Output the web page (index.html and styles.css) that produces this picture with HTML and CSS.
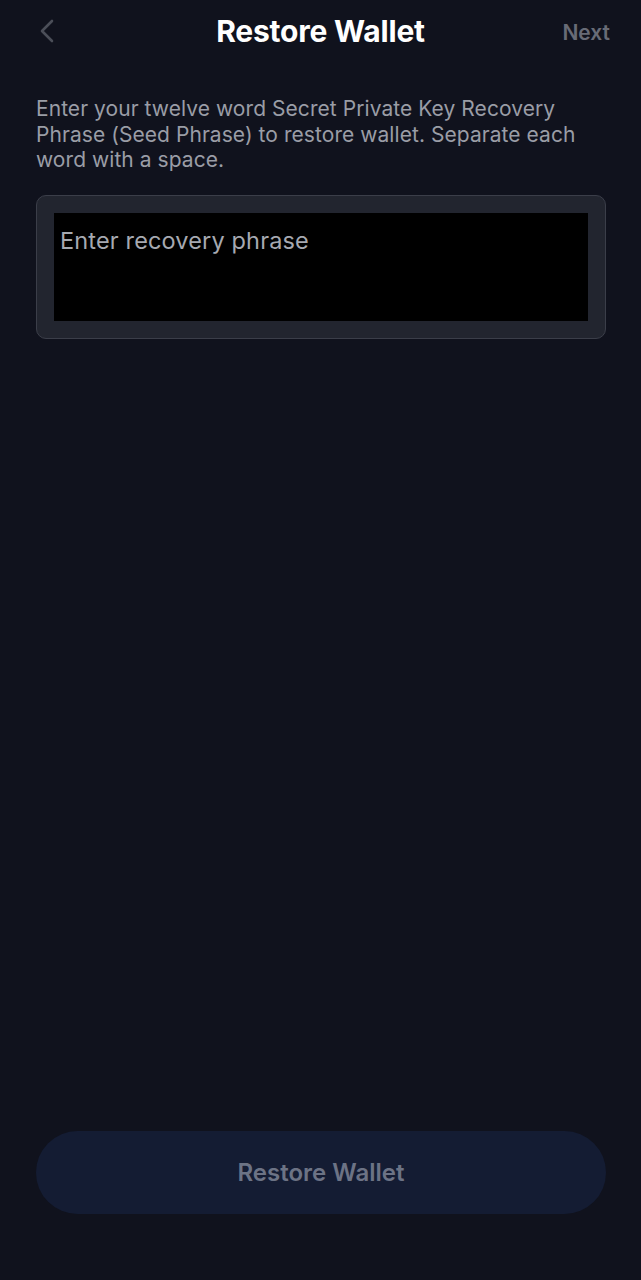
FILE: index.html
```html
<!DOCTYPE html>
<html>
<head>
<meta charset="utf-8">
<link rel="stylesheet" href="styles.css">
</head>
<body>
<div class="screen">
  <header class="topbar">
    <button class="back" aria-label="Back">
      <svg width="16" height="24" viewBox="0 0 16 24"><path d="M13 2 L3 12 L13 22" fill="none" stroke="#4b4e58" stroke-width="2.6" stroke-linecap="round" stroke-linejoin="round"/></svg>
    </button>
    <h1 class="title">Restore Wallet</h1>
    <span class="next">Next</span>
  </header>
  <p class="desc">Enter your twelve word Secret Private Key Recovery Phrase (Seed Phrase) to restore wallet. Separate each word with a space.</p>
  <div class="field">
    <div class="input">Enter recovery phrase</div>
  </div>
  <div class="spacer"></div>
  <button class="primary">Restore Wallet</button>
</div>
</body>
</html>
```
FILE: styles.css
```css
html, body {
  margin: 0;
  padding: 0;
  background: #10121d;
}
body {
  font-family: Inter, "Noto Sans", sans-serif;
}
.screen {
  height: 1280px;
  box-sizing: border-box;
  padding: 0 36px 66px 36px;
  display: flex;
  flex-direction: column;
}
.topbar {
  height: 62px;
  display: flex;
  align-items: center;
  justify-content: space-between;
  position: relative;
}
.back {
  background: none;
  border: none;
  padding: 0;
  margin-left: 3px;
  display: flex;
}
.title {
  position: absolute;
  left: 0;
  right: 0;
  top: 12px;
  margin: 0;
  text-align: center;
  font-size: 30px;
  font-weight: 700;
  color: #ffffff;
  letter-spacing: -0.2px;
  line-height: 38px;
  pointer-events: none;
}
.next {
  font-size: 21px;
  font-weight: 600;
  color: #686b76;
  margin-right: -5px;
  margin-top: 3px;
}
.desc {
  margin: 34px 0 0 0;
  font-size: 21px;
  line-height: 25.5px;
  color: #9a9da6;
  letter-spacing: 0.06px;
}
.field {
  margin-top: 22px;
  margin-right: -1px;
  background: #22252f;
  border: 1px solid #3b3e49;
  border-radius: 10px;
  padding: 17px;
}
.input {
  background: #000000;
  height: 108px;
  box-sizing: border-box;
  padding: 14px 6px;
  font-size: 23.5px;
  line-height: 28px;
  color: #a6a9b1;
  letter-spacing: 0.15px;
}
.spacer {
  flex: 1;
}
.primary {
  height: 83px;
  border: none;
  border-radius: 42px;
  background: #141c33;
  color: #6c7385;
  font-family: Inter, "Noto Sans", sans-serif;
  font-size: 24px;
  font-weight: 600;
  margin-right: -1px;
}
```
